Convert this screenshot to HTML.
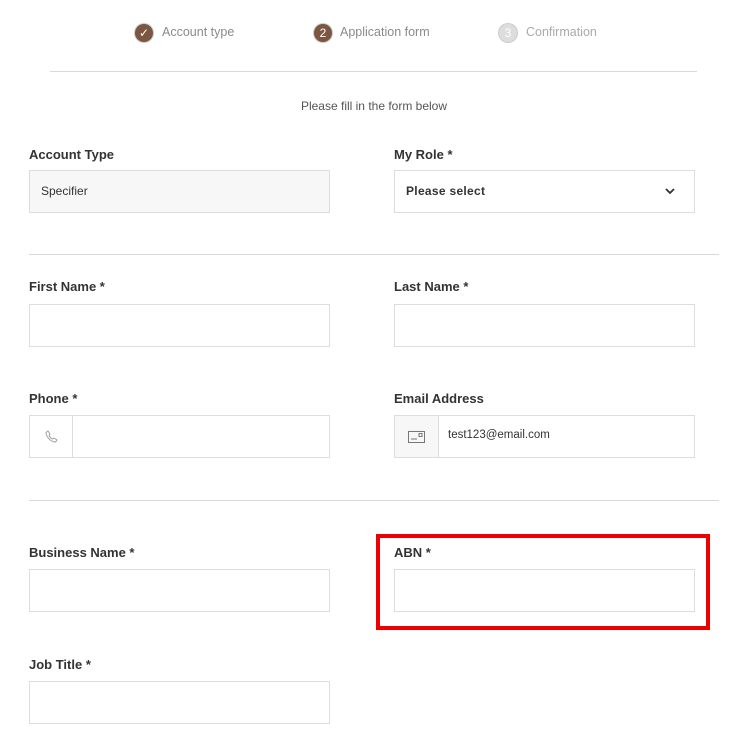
<!DOCTYPE html><html><head><style>
body{margin:0;width:736px;height:747px;background:#fff;font-family:"Liberation Sans",sans-serif;position:relative;overflow:hidden}
.a{position:absolute}
.lbl{position:absolute;font-size:13px;font-weight:bold;color:#333}
.in{position:absolute;border:1px solid #ddd;box-sizing:border-box;width:301px;height:43px;background:#fff}
.hr{position:absolute;height:1px;background:#d9d9d9}
.st{position:absolute;top:25px;font-size:12.5px;color:#8a8a8a}
.c{position:absolute;top:24px;width:18px;height:18px;border-radius:50%;color:#fff;font-size:12px;text-align:center;line-height:18px;box-shadow:0 0 0 1px #ccc}
</style></head><body>
<div class="c" style="left:135px;background:#7b5640">✓</div><div class="st" style="left:162px">Account type</div>
<div class="c" style="left:314px;background:#7b5640">2</div><div class="st" style="left:340px">Application form</div>
<div class="c" style="left:499px;background:#ddd">3</div><div class="st" style="left:526px;color:#aaa">Confirmation</div>
<div class="hr" style="left:50px;top:71px;width:647px"></div>
<div class="a" style="left:0;width:748px;top:99px;text-align:center;font-size:12px;color:#555">Please fill in the form below</div>

<div class="lbl" style="left:29px;top:147px">Account Type</div>
<div class="in" style="left:29px;top:170px;width:301px;background:#f7f7f7;font-size:12px;color:#333;padding:13px 11px">Specifier</div>
<div class="lbl" style="left:394px;top:147px">My Role *</div>
<div class="in" style="left:394px;top:170px;font-size:12px;color:#333;padding:13px 11px;font-weight:bold;letter-spacing:.3px">Please select<svg class="a" style="left:270px;top:17px" width="10" height="7" viewBox="0 0 10 7"><path d="M1 1l4 4 4-4" stroke="#333" stroke-width="1.8" fill="none"/></svg></div>
<div class="hr" style="left:29px;top:254px;width:690px"></div>

<div class="lbl" style="left:29px;top:279px">First Name *</div>
<div class="in" style="left:29px;top:304px"></div>
<div class="lbl" style="left:394px;top:279px">Last Name *</div>
<div class="in" style="left:394px;top:304px"></div>

<div class="lbl" style="left:29px;top:391px">Phone *</div>
<div class="in" style="left:29px;top:415px"><div class="a" style="left:42px;top:0;width:1px;height:41px;background:#ddd"></div><svg class="a" style="left:15px;top:14px" width="13" height="13" viewBox="0 0 13 13"><path d="M3 1l2 3-1 1.5c1 2 2 3 3.5 3.5L9 8l3 2-1.5 2C6 12 1 7 1 2.5Z" stroke="#999" fill="none" stroke-width=".9"/></svg></div>
<div class="lbl" style="left:394px;top:391px">Email Address</div>
<div class="in" style="left:394px;top:415px;font-size:11.5px;color:#333"><div class="a" style="left:0;top:0;width:43px;height:41px;background:#f7f7f7;border-right:1px solid #ddd"></div><svg class="a" style="left:13px;top:15px" width="17" height="12" viewBox="0 0 17 12"><rect x=".5" y=".5" width="16" height="11" fill="none" stroke="#777"/><rect x="11" y="2.5" width="3" height="3" fill="none" stroke="#777"/><path d="M3 8h6" stroke="#777"/></svg><span class="a" style="left:53px;top:13px">test123@email.com</span></div>
<div class="hr" style="left:29px;top:500px;width:690px"></div>

<div class="lbl" style="left:29px;top:545px">Business Name *</div>
<div class="in" style="left:29px;top:569px"></div>
<div class="lbl" style="left:394px;top:545px">ABN *</div>
<div class="in" style="left:394px;top:569px"></div>
<div class="a" style="left:376px;top:534px;width:334px;height:96px;box-sizing:border-box;border:4px solid #ee0000"></div>

<div class="lbl" style="left:29px;top:657px">Job Title *</div>
<div class="in" style="left:29px;top:681px"></div>
</body></html>
